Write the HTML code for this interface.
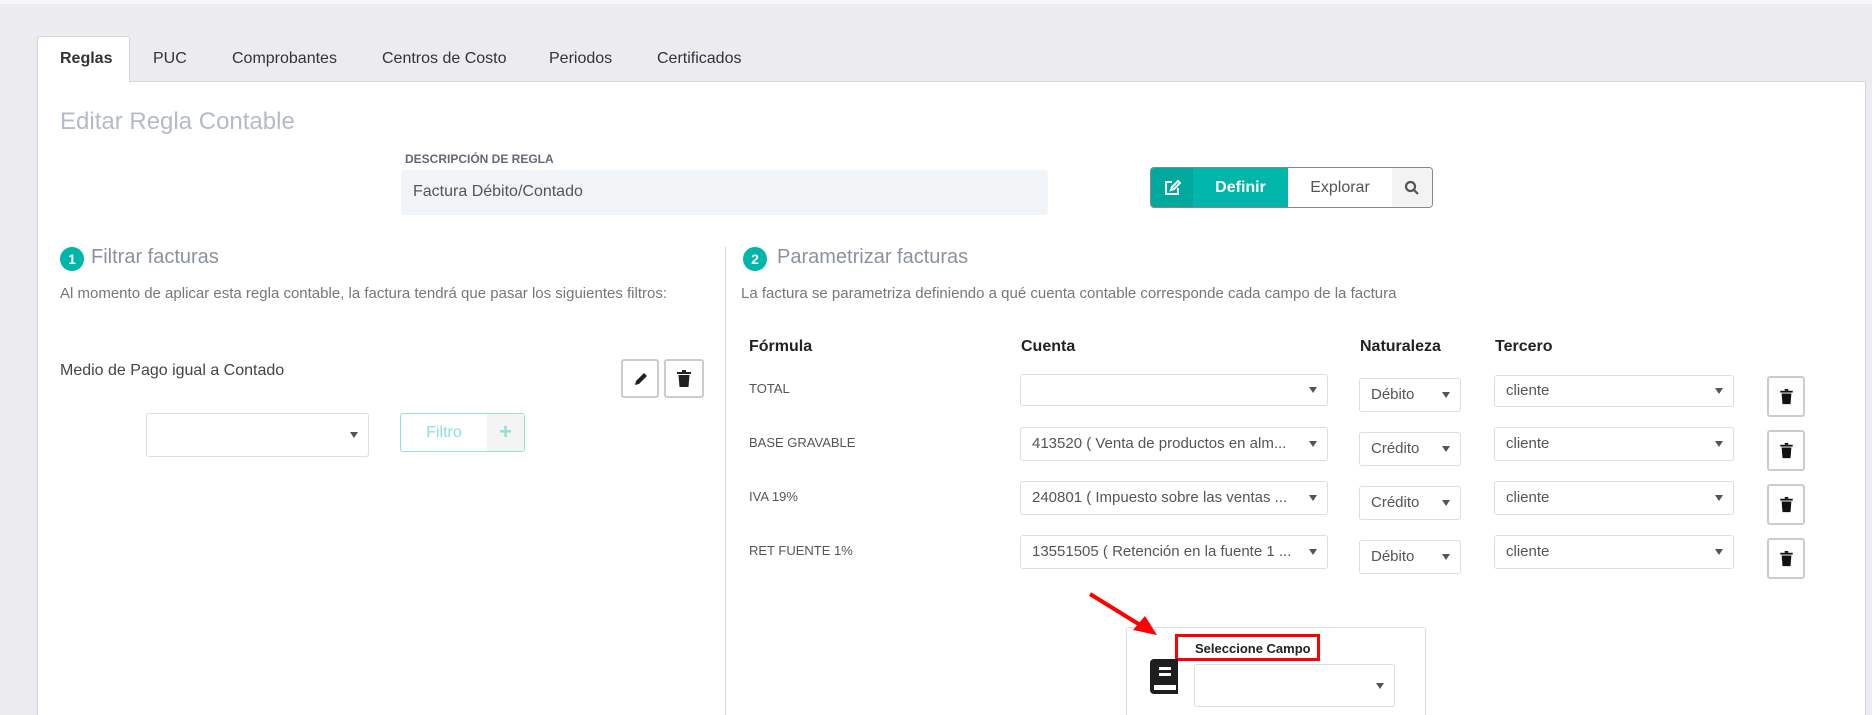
<!DOCTYPE html>
<html style="width:1872px;height:715px;overflow:hidden"><head><meta charset="utf-8"><style>
*{box-sizing:border-box;margin:0;padding:0}
body{width:1872px;height:715px;overflow:hidden;background:#ececf0;font-family:"Liberation Sans",sans-serif;position:relative;color:#444}
.a{position:absolute}
.topline{left:0;top:0;width:1872px;height:4px;background:#f7f7f9}
.tab{top:36px;height:45px;font-size:16px;color:#333;line-height:45px}
.panel{left:37px;top:81px;width:1829px;height:634px;background:#fff;border:1px solid #d6d6da;border-bottom:none}
.sel{background:#fff;border:1px solid #ddd;border-radius:3px;font-size:15px;color:#555;padding-left:11px;white-space:nowrap;overflow:hidden}
.sel:after{content:"";position:absolute;right:10px;top:50%;margin-top:-3px;border-left:4px solid transparent;border-right:4px solid transparent;border-top:6px solid #555}
.tb{background:#fff;border:2px solid #ccc;border-radius:3px}
.circ{width:24px;height:24px;border-radius:50%;background:#00b5a9;color:#fff;font-size:14px;font-weight:bold;text-align:center;line-height:24px}
.h{font-size:16px;font-weight:bold;color:#222}
.lab{font-size:13px;color:#555}
</style></head><body>
<div class="a topline"></div>
<div class="a" style="left:37px;top:36px;width:93px;height:46px;background:#fff;border:1px solid #d6d6da;border-bottom:none;border-radius:3px 3px 0 0;z-index:2"></div>
<div class="a tab" style="left:60px;font-weight:bold;z-index:3">Reglas</div>
<div class="a tab" style="left:153px">PUC</div>
<div class="a tab" style="left:232px">Comprobantes</div>
<div class="a tab" style="left:382px">Centros de Costo</div>
<div class="a tab" style="left:549px">Periodos</div>
<div class="a tab" style="left:657px">Certificados</div>
<div class="a panel"></div>
<div class="a" style="left:60px;top:108px;font-size:24px;color:#b3bcc6">Editar Regla Contable</div>
<div class="a" style="left:405px;top:152px;font-size:12px;font-weight:bold;color:#667">DESCRIPCIÓN DE REGLA</div>
<div class="a" style="left:401px;top:170px;width:647px;height:45px;background:#f1f4f7;border-radius:3px;font-size:16px;color:#555;padding:13px 12px">Factura Débito/Contado</div>
<div class="a" style="left:1150px;top:167px;width:283px;height:41px;border:1px solid #888;border-radius:4px;overflow:hidden;display:flex">
 <div style="width:42px;background:#00a99d;display:flex;align-items:center;justify-content:center"><svg width="18" height="18" viewBox="0 0 18 18" fill="none" stroke="#fff" stroke-width="2"><path d="M9 3H3v12h12V9"/><path d="M8 11l1-3 6-6 2 2-6 6z"/></svg></div>
 <div style="width:95px;background:#00b5a9;color:#fff;font-weight:bold;font-size:16px;text-align:center;line-height:39px">Definir</div>
 <div style="width:104px;background:#fff;color:#555;font-size:16px;text-align:center;line-height:39px">Explorar</div>
 <div style="flex:1;background:#f3f3f3;display:flex;align-items:center;justify-content:center"><svg width="16" height="16" viewBox="0 0 16 16" fill="none" stroke="#555" stroke-width="2.2"><circle cx="6.5" cy="6.5" r="4.5"/><path d="M10 10l4 4"/></svg></div>
</div>
<div class="a circ" style="left:60px;top:247px">1</div>
<div class="a" style="left:91px;top:246px;font-size:20px;color:#8a939c">Filtrar facturas</div>
<div class="a" style="left:60px;top:285px;font-size:15px;color:#777">Al momento de aplicar esta regla contable, la factura tendrá que pasar los siguientes filtros:</div>
<div class="a" style="left:725px;top:247px;width:1px;height:470px;background:#d6d6da"></div>
<div class="a circ" style="left:743px;top:247px">2</div>
<div class="a" style="left:777px;top:246px;font-size:20px;color:#8a939c">Parametrizar facturas</div>
<div class="a" style="left:741px;top:285px;font-size:15px;color:#777">La factura se parametriza definiendo a qué cuenta contable corresponde cada campo de la factura</div>
<div class="a" style="left:60px;top:362px;font-size:16px;color:#444">Medio de Pago igual a Contado</div>
<div class="a tb" style="left:621px;top:359px;width:38px;height:39px"><svg class="a" style="left:10px;top:10px" width="16" height="16" viewBox="0 0 16 16"><path d="M2 14l1-4 8-8 3 3-8 8z" fill="#222"/></svg></div>
<div class="a tb" style="left:664px;top:359px;width:40px;height:39px"><svg class="a" style="left:11px;top:9px" width="14" height="18" viewBox="0 0 14 18" fill="#222"><rect x="0" y="2" width="14" height="2"/><rect x="5" y="0" width="4" height="2"/><path d="M1.5 5h11l-1 12h-9z"/></svg></div>
<div class="a sel" style="left:146px;top:413px;width:223px;height:44px"></div>
<div class="a" style="left:400px;top:413px;width:125px;height:39px;border:1px solid #8ee0d8;border-radius:3px;display:flex">
 <div style="width:86px;color:#8ee0d8;font-size:16px;text-align:center;line-height:37px">Filtro</div>
 <div style="flex:1;background:#f4f4f4;color:#8ee0d8;font-size:22px;font-weight:bold;text-align:center;line-height:35px">+</div>
</div>
<div class="a h" style="left:749px;top:338px">Fórmula</div>
<div class="a h" style="left:1021px;top:338px">Cuenta</div>
<div class="a h" style="left:1360px;top:338px">Naturaleza</div>
<div class="a h" style="left:1495px;top:338px">Tercero</div>

<div class="a lab" style="left:749px;top:381px">TOTAL</div>
<div class="a sel" style="left:1020px;top:374px;width:308px;height:32px"></div>
<div class="a sel" style="left:1359px;top:378px;width:102px;height:34px;line-height:32px">Débito</div>
<div class="a sel" style="left:1494px;top:375px;width:240px;height:32px;line-height:30px">cliente</div>

<div class="a lab" style="left:749px;top:435px">BASE GRAVABLE</div>
<div class="a sel" style="left:1020px;top:427px;width:308px;height:34px;line-height:32px">413520 ( Venta de productos en alm...</div>
<div class="a sel" style="left:1359px;top:432px;width:102px;height:34px;line-height:32px">Crédito</div>
<div class="a sel" style="left:1494px;top:427px;width:240px;height:34px;line-height:32px">cliente</div>

<div class="a lab" style="left:749px;top:489px">IVA 19%</div>
<div class="a sel" style="left:1020px;top:481px;width:308px;height:34px;line-height:32px">240801 ( Impuesto sobre las ventas ...</div>
<div class="a sel" style="left:1359px;top:486px;width:102px;height:34px;line-height:32px">Crédito</div>
<div class="a sel" style="left:1494px;top:481px;width:240px;height:34px;line-height:32px">cliente</div>

<div class="a lab" style="left:749px;top:543px">RET FUENTE 1%</div>
<div class="a sel" style="left:1020px;top:535px;width:308px;height:34px;line-height:32px">13551505 ( Retención en la fuente 1 ...</div>
<div class="a sel" style="left:1359px;top:540px;width:102px;height:34px;line-height:32px">Débito</div>
<div class="a sel" style="left:1494px;top:535px;width:240px;height:34px;line-height:32px">cliente</div>

<div class="a tb" style="left:1767px;top:376px;width:38px;height:41px"><svg class="a" style="left:11px;top:11px" width="13" height="16" viewBox="0 0 14 18" fill="#111"><rect x="0" y="2" width="14" height="2"/><rect x="5" y="0" width="4" height="2"/><path d="M1.5 5h11l-1 12h-9z"/></svg></div>
<div class="a tb" style="left:1767px;top:430px;width:38px;height:41px"><svg class="a" style="left:11px;top:11px" width="13" height="16" viewBox="0 0 14 18" fill="#111"><rect x="0" y="2" width="14" height="2"/><rect x="5" y="0" width="4" height="2"/><path d="M1.5 5h11l-1 12h-9z"/></svg></div>
<div class="a tb" style="left:1767px;top:484px;width:38px;height:41px"><svg class="a" style="left:11px;top:11px" width="13" height="16" viewBox="0 0 14 18" fill="#111"><rect x="0" y="2" width="14" height="2"/><rect x="5" y="0" width="4" height="2"/><path d="M1.5 5h11l-1 12h-9z"/></svg></div>
<div class="a tb" style="left:1767px;top:538px;width:38px;height:41px"><svg class="a" style="left:11px;top:11px" width="13" height="16" viewBox="0 0 14 18" fill="#111"><rect x="0" y="2" width="14" height="2"/><rect x="5" y="0" width="4" height="2"/><path d="M1.5 5h11l-1 12h-9z"/></svg></div>

<div class="a" style="left:1126px;top:627px;width:300px;height:88px;border:1px solid #ddd;border-bottom:none;border-radius:3px 3px 0 0;background:#fff"></div>
<div class="a" style="left:1175px;top:634px;width:145px;height:27px;border:3px solid #f00;font-size:13px;font-weight:bold;color:#222;padding:4px 0 0 17px;white-space:nowrap">Seleccione Campo</div>
<svg class="a" style="left:1150px;top:659px" width="28" height="35" viewBox="0 0 28 35"><path d="M4 0h24v35H4a4 4 0 0 1-4-4V4a4 4 0 0 1 4-4z" fill="#1e1e1e"/><rect x="9" y="8" width="12" height="3" fill="#fff"/><rect x="9" y="14" width="12" height="3" fill="#fff"/><rect x="4" y="26" width="22" height="5" fill="#fff"/></svg>
<div class="a sel" style="left:1194px;top:664px;width:201px;height:43px"></div>
<svg class="a" style="left:1085px;top:590px" width="80" height="50" viewBox="0 0 80 50"><path d="M5 4L60 38" stroke="#f00" stroke-width="4"/><path d="M72 45L48 40L60 26z" fill="#f00"/></svg>
</body></html>
